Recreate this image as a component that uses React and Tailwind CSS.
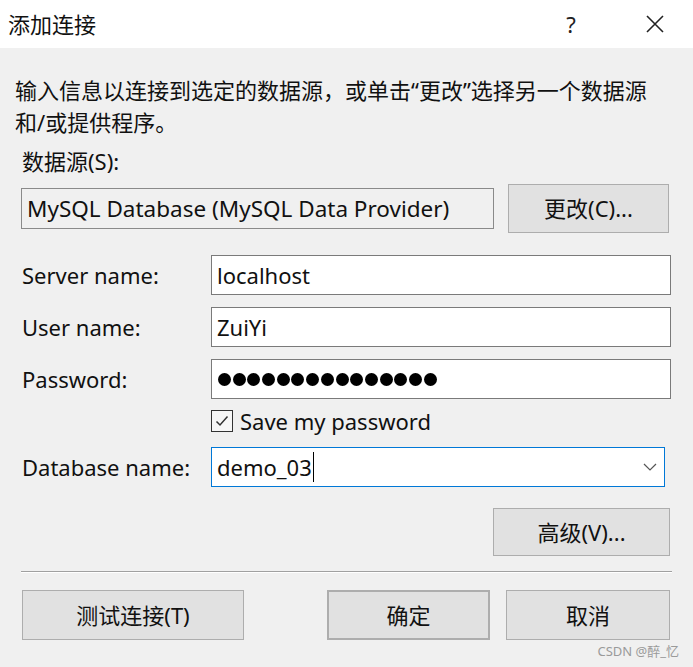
const cn = '"Noto Sans", "Noto Sans CJK SC", sans-serif';

const Btn = ({ children, className = "" }) => (
  <button
    className={`flex items-center justify-center bg-[#e1e1e1] border border-[#adadad] text-[22px] text-[#111] ${className}`}
  >
    {children}
  </button>
);

const Field = ({ label, children }) => (
  <div className="flex items-center h-[40px]">
    <div className="w-[211px] pl-[22px] text-[22px] text-[#111]">{label}</div>
    {children}
  </div>
);

const App = () => {
  return (
    <div className="w-[693px] h-[667px] bg-[#f0f0f0] flex flex-col" style={{ fontFamily: cn }}>
      {/* title bar */}
      <div className="h-[48px] bg-white flex items-center pl-[8px]">
        <span className="text-[22px] text-[#111] flex-1">添加连接</span>
        <span className="text-[22px] text-[#222] w-[28px] text-center mr-[60px]">?</span>
        <svg width="20" height="20" viewBox="0 0 20 20" className="mr-[28px]">
          <path d="M2 2 L18 18 M18 2 L2 18" stroke="#222" strokeWidth="1.6" />
        </svg>
      </div>

      {/* description */}
      <div className="pt-[26px] pl-[15px] pr-[10px] text-[22px] leading-[32px] text-[#111]">
        <div className="whitespace-nowrap">输入信息以连接到选定的数据源，或单击“更改”选择另一个数据源</div>
        <div>和/或提供程序。</div>
      </div>

      <div className="mt-[9px] pl-[22px] text-[22px] leading-[28px] text-[#111]">数据源(S):</div>

      <div className="mt-[9px] flex items-center pl-[21px] h-[49px]">
        <div className="w-[473px] h-[41px] border border-[#8a8a8a] bg-[#f0f0f0] flex items-center pl-[5px] text-[22.5px] text-[#111]">
          MySQL Database (MySQL Data Provider)
        </div>
        <Btn className="ml-[14px] w-[161px] h-[49px]">更改(C)...</Btn>
      </div>

      <div className="mt-[22px] flex flex-col gap-[12px]">
        <Field label="Server name:">
          <div className="w-[460px] h-[40px] bg-white border border-[#7a7a7a] flex items-center pl-[5px] text-[22px] text-[#111]">
            localhost
          </div>
        </Field>
        <Field label="User name:">
          <div className="w-[460px] h-[40px] bg-white border border-[#7a7a7a] flex items-center pl-[5px] text-[22px] text-[#111]">
            ZuiYi
          </div>
        </Field>
        <Field label="Password:">
          <div className="w-[460px] h-[40px] bg-white border border-[#7a7a7a] flex items-center pl-[6px] gap-[1.7px]">
            {Array.from({ length: 15 }).map((_, i) => (
              <span key={i} className="w-[13px] h-[13px] rounded-full bg-black" />
            ))}
          </div>
        </Field>
      </div>

      <div className="mt-[10px] flex items-center h-[24px] pl-[211px]">
        <div className="w-[22px] h-[22px] border border-[#333] bg-[#f7f7f7] flex items-center justify-center">
          <svg width="16" height="16" viewBox="0 0 16 16">
            <path d="M2.5 8.5 L6 12 L13.5 3.5" stroke="#333" strokeWidth="1.5" fill="none" />
          </svg>
        </div>
        <span className="ml-[7px] text-[22px] text-[#111]">Save my password</span>
      </div>

      <div className="mt-[14px]">
        <Field label="Database name:">
          <div className="w-[454px] h-[40px] bg-white border border-[#0078d7] flex items-center pl-[5px] text-[22px] text-[#111]">
            <span>demo_03</span>
            <span className="w-[1px] h-[30px] bg-black ml-[1px]" />
            <div className="flex-1" />
            <svg width="14" height="10" viewBox="0 0 14 10" className="mr-[7px]">
              <path d="M1 2 L7 8 L13 2" stroke="#555" strokeWidth="1.2" fill="none" />
            </svg>
          </div>
        </Field>
      </div>

      <div className="mt-[21px] flex justify-end pr-[23px]">
        <Btn className="w-[177px] h-[48px]">高级(V)...</Btn>
      </div>

      <div className="mt-[15px] mx-[21px] h-[2px] border-t border-[#a0a0a0] border-b border-b-white" />

      <div className="mt-[17px] flex items-center pl-[22px] pr-[23px] h-[50px]">
        <Btn className="w-[222px] h-[50px]">测试连接(T)</Btn>
        <div className="flex-1" />
        <Btn className="w-[163px] h-[50px] border-2 border-[#0078d7]">确定</Btn>
        <Btn className="ml-[16px] w-[164px] h-[50px]">取消</Btn>
      </div>

      <div className="mt-[2px] flex justify-end pr-[14px] text-[13px] text-[#9a9a9a]">CSDN @醉_忆</div>
    </div>
  );
};

export default App;
